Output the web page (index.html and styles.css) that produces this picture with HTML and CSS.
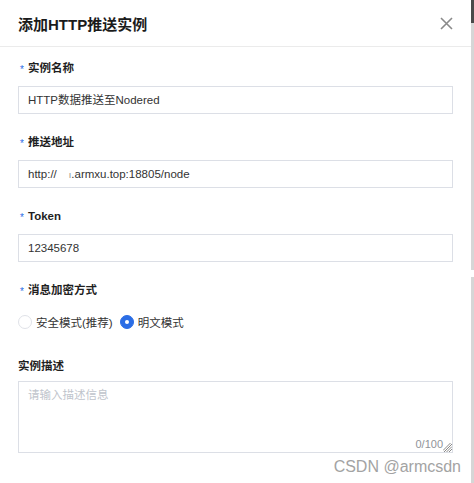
FILE: index.html
```html
<!DOCTYPE html>
<html lang="zh-CN">
<head>
<meta charset="utf-8">
<title>添加HTTP推送实例</title>
<link rel="stylesheet" href="styles.css">
</head>
<body>
<div class="dialog">
  <div class="header">
    <span class="title">添加HTTP推送实例</span>
    <svg class="close" width="13" height="13" viewBox="0 0 13 13"><path d="M1 1 L12 12 M12 1 L1 12" stroke="#8a8a8a" stroke-width="1.6" fill="none"/></svg>
  </div>
  <div class="body">
    <div class="field">
      <div class="label"><span class="req">*</span>实例名称</div>
      <div class="input">HTTP数据推送至Nodered</div>
    </div>
    <div class="field">
      <div class="label"><span class="req">*</span>推送地址</div>
      <div class="input">http://<span class="redact"></span><span class="mark">ı</span>.armxu.top:18805/node</div>
    </div>
    <div class="field">
      <div class="label"><span class="req">*</span>Token</div>
      <div class="input">12345678</div>
    </div>
    <div class="field">
      <div class="label"><span class="req">*</span>消息加密方式</div>
      <div class="radios">
        <span class="radio"><span class="dot"></span>安全模式(推荐)</span>
        <span class="radio checked"><span class="dot"></span>明文模式</span>
      </div>
    </div>
    <div class="field desc">
      <div class="label">实例描述</div>
      <div class="textarea-wrap">
        <textarea class="textarea" placeholder="请输入描述信息"></textarea>
        <span class="count">0/100</span>
        <svg class="grip" width="9" height="9" viewBox="0 0 9 9"><path d="M1 9 L9 1 M3.5 9 L9 3.5 M6 9 L9 6 M0 7.5 L7.5 0" stroke="#7a7a7a" stroke-width="0.9" fill="none"/></svg>
      </div>
    </div>
  </div>
  <div class="watermark">CSDN @armcsdn</div>
  <div class="scrollbar"></div>
</div>
</body>
</html>
```
FILE: styles.css
```css
* { box-sizing: border-box; }
html, body {
  margin: 0;
  padding: 0;
  background: #ffffff;
}
body {
  width: 474px;
  height: 483px;
  overflow: hidden;
  font-family: "Liberation Sans", "Noto Sans CJK SC", sans-serif;
  color: #333333;
}
.dialog {
  position: relative;
  width: 474px;
  height: 483px;
}
.header {
  height: 47px;
  display: flex;
  align-items: center;
  justify-content: space-between;
  padding: 0 21px 0 18px;
  border-bottom: 1px solid #ebebeb;
}
.title {
  font-size: 15px;
  font-weight: bold;
  color: #1b1b1b;
}
.close { display: block; }
.body {
  padding: 11px 21px 0 18px;
}
.field { margin-bottom: 18px; }
.field.desc { margin-top: 20px; }
.label {
  height: 20px;
  line-height: 20px;
  font-size: 11.5px;
  font-weight: bold;
  color: #1f1f1f;
  margin-bottom: 8px;
  display: flex;
  align-items: center;
}
.desc .label { margin-bottom: 5px; }
.req {
  display: inline-block;
  width: 10px;
  padding-left: 2px;
  color: #2b6de5;
  font-size: 10px;
  font-weight: normal;
  line-height: 10px;
  position: relative;
  top: 2px;
}
.input {
  height: 28px;
  line-height: 26px;
  border: 1px solid #dcdfe6;
  padding: 0 9px;
  font-size: 11.5px;
  color: #333333;
  white-space: nowrap;
}
.redact {
  display: inline-block;
  width: 12px;
}
.mark { color: #888888; font-size: 9px; }
.radios {
  height: 28px;
  display: flex;
  align-items: center;
  gap: 7px;
  font-size: 11.5px;
  color: #333333;
}
.radio {
  display: flex;
  align-items: center;
  gap: 4px;
}
.dot {
  width: 14px;
  height: 14px;
  border-radius: 50%;
  border: 1px solid #e0e2e8;
  background: #ffffff;
  display: inline-block;
  position: relative;
}
.radio.checked .dot {
  background: #2b6de5;
  border-color: #2b6de5;
}
.radio.checked .dot::after {
  content: "";
  position: absolute;
  left: 4px;
  top: 4px;
  width: 4px;
  height: 4px;
  border-radius: 50%;
  background: #ffffff;
}
.textarea-wrap {
  position: relative;
  height: 72px;
}
.textarea {
  display: block;
  width: 100%;
  height: 72px;
  border: 1px solid #dcdfe6;
  padding: 3px 9px;
  line-height: 20px;
  font-family: "Liberation Sans", "Noto Sans CJK SC", sans-serif;
  font-size: 11.5px;
  color: #333333;
  resize: none;
  outline: none;
  margin: 0;
}
.textarea::placeholder { color: #c0c4cc; }
.count {
  position: absolute;
  right: 10px;
  bottom: 2px;
  font-size: 11px;
  color: #909399;
  line-height: 14px;
}
.grip {
  position: absolute;
  right: 1px;
  bottom: 1px;
}
.watermark {
  position: absolute;
  right: 13px;
  top: 458px;
  font-family: "Liberation Sans", sans-serif;
  font-size: 16px;
  line-height: 18px;
  color: #a3a3a3;
  white-space: nowrap;
}
.scrollbar {
  position: absolute;
  right: 0;
  top: 0;
  width: 3px;
  height: 483px;
  background: linear-gradient(to bottom, #4a4a4a 0, #4a4a4a 23px, #d6d6d6 23px, #d6d6d6 270px, #ffffff 270px, #ffffff 277px, #d6d6d6 277px);
}
```
